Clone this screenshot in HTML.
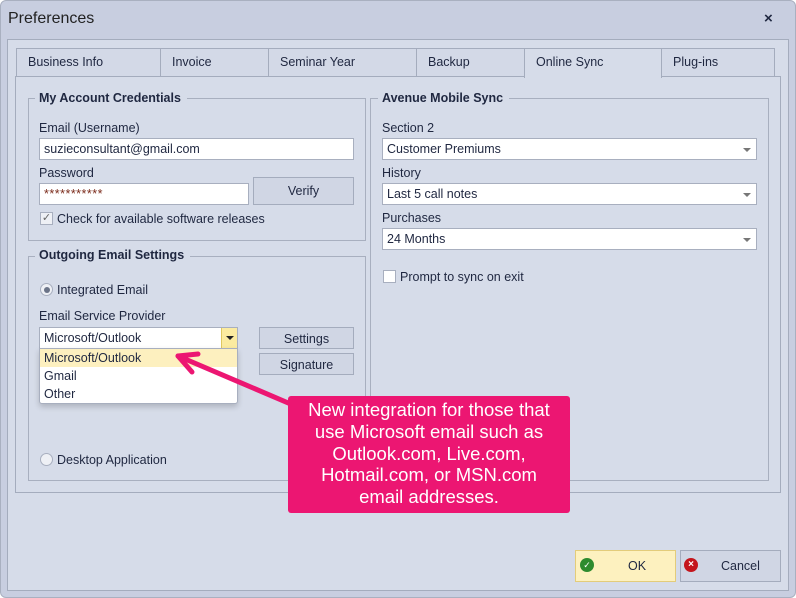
<!DOCTYPE html>
<html><head><meta charset="utf-8"><style>
*{box-sizing:border-box;margin:0;padding:0}
body{width:796px;height:598px;background:#fff;font-family:"Liberation Sans","DejaVu Sans",sans-serif;font-size:12px;color:#1f2740;position:relative;overflow:hidden}
.a{position:absolute}
.win{left:0;top:0;width:796px;height:598px;background:#c8cee0;border:1px solid #a9b0c0;border-radius:6px}
.box{border:1px solid #a4acbd}
.tab{top:48px;height:29px;border:1px solid #a4acbd;border-bottom:none;background:#d3d9e7;padding:6px 0 0 11px;font-size:12.5px}
.grp{border:1px solid #a8afbf}
.gt{background:#d6dce9;padding:0 6px 0 4px;font-weight:bold;font-size:12.5px}
.in{background:#fff;border:1px solid #a8afbf;height:22px;padding:3px 0 0 4px;font-size:12.5px}
.btn{border:1px solid #a4acbd;background:#d0d6e4;text-align:center;font-size:12.5px}
.dd::after{content:"";position:absolute;right:5px;top:9px;border:4px solid transparent;border-top:4px solid #777;border-bottom:none}
.lbl{font-size:12.5px}
.it{height:18px;line-height:18px;padding-left:4px;font-size:12.5px}
</style></head><body>
<div class="a win"></div>
<div class="a" style="left:8px;top:10px;font-size:16px;color:#222">Preferences</div>
<div class="a" style="left:764px;top:10px;font-size:15px;font-weight:bold">×</div>
<div class="a" style="left:7px;top:39px;width:782px;height:552px;border:1px solid #a4acbd;background:#d6dce9"></div>
<!-- tabs -->
<div class="a tab" style="left:16px;width:145px">Business Info</div>
<div class="a tab" style="left:160px;width:109px">Invoice</div>
<div class="a tab" style="left:268px;width:149px">Seminar Year</div>
<div class="a tab" style="left:416px;width:109px">Backup</div>
<div class="a tab" style="left:661px;width:114px">Plug-ins</div>
<div class="a box" style="left:15px;top:76px;width:766px;height:417px"></div>
<div class="a tab" style="left:524px;top:48px;width:138px;height:30px;background:#d6dce9">Online Sync</div>
<!-- Credentials -->
<div class="a grp" style="left:28px;top:98px;width:338px;height:143px"></div>
<div class="a gt" style="left:35px;top:91px">My Account Credentials</div>
<div class="a lbl" style="left:39px;top:121px">Email (Username)</div>
<div class="a in" style="left:39px;top:138px;width:315px">suzieconsultant@gmail.com</div>
<div class="a lbl" style="left:39px;top:166px">Password</div>
<div class="a in" style="left:39px;top:183px;width:210px;color:#7a2a1a;letter-spacing:0.5px">***********</div>
<div class="a btn" style="left:253px;top:177px;width:101px;height:28px;padding-top:6px">Verify</div>
<div class="a" style="left:40px;top:212px;width:13px;height:13px;border:1px solid #a8afbf;background:#eef0f5;font-size:11px;line-height:11px;text-align:center;color:#666">✓</div>
<div class="a lbl" style="left:57px;top:212px">Check for available software releases</div>
<!-- Outgoing -->
<div class="a grp" style="left:28px;top:256px;width:338px;height:225px"></div>
<div class="a gt" style="left:35px;top:248px">Outgoing Email Settings</div>
<div class="a" style="left:40px;top:283px;width:13px;height:13px;border:1px solid #a8afbf;border-radius:50%;background:#eef0f5"><div class="a" style="left:2.5px;top:2.5px;width:6px;height:6px;border-radius:50%;background:#6b7488"></div></div>
<div class="a lbl" style="left:57px;top:283px">Integrated Email</div>
<div class="a lbl" style="left:39px;top:309px">Email Service Provider</div>
<div class="a in" style="left:39px;top:327px;width:199px">Microsoft/Outlook</div>
<div class="a" style="left:221px;top:328px;width:16px;height:20px;background:#fbeba0;border-left:1px solid #e0c860"><div class="a" style="left:4px;top:8px;border:4px solid transparent;border-top:4px solid #222;border-bottom:none"></div></div>
<div class="a btn" style="left:259px;top:327px;width:95px;height:22px;padding-top:4px">Settings</div>
<div class="a btn" style="left:259px;top:353px;width:95px;height:22px;padding-top:4px">Signature</div>
<div class="a" style="left:39px;top:348px;width:199px;height:56px;background:#fff;border:1px solid #a8afbf;border-radius:0 0 3px 3px;box-shadow:0 3px 6px rgba(0,0,0,0.18)">
<div class="it" style="background:#fdf0bf">Microsoft/Outlook</div>
<div class="it">Gmail</div>
<div class="it">Other</div>
</div>
<div class="a" style="left:40px;top:453px;width:13px;height:13px;border:1px solid #a8afbf;border-radius:50%;background:#eef0f5"></div>
<div class="a lbl" style="left:57px;top:453px">Desktop Application</div>
<!-- Avenue -->
<div class="a grp" style="left:370px;top:98px;width:399px;height:383px"></div>
<div class="a gt" style="left:378px;top:91px">Avenue Mobile Sync</div>
<div class="a lbl" style="left:382px;top:121px">Section 2</div>
<div class="a in dd" style="left:382px;top:138px;width:375px">Customer Premiums</div>
<div class="a lbl" style="left:382px;top:166px">History</div>
<div class="a in dd" style="left:382px;top:183px;width:375px">Last 5 call notes</div>
<div class="a lbl" style="left:382px;top:211px">Purchases</div>
<div class="a in dd" style="left:382px;top:228px;width:375px">24 Months</div>
<div class="a" style="left:383px;top:270px;width:13px;height:13px;border:1px solid #a8afbf;background:#fff"></div>
<div class="a lbl" style="left:400px;top:270px">Prompt to sync on exit</div>
<!-- buttons -->
<div class="a" style="left:575px;top:550px;width:101px;height:32px;background:#fdf1bf;border:1px solid #e3cc7a;padding:8px 0 0 52px;font-size:12.5px">OK</div>
<div class="a" style="left:580px;top:558px;width:14px;height:14px;border-radius:50%;background:#2e8b2e;color:#fff;font-size:9px;line-height:14px;text-align:center;font-weight:bold">✓</div>
<div class="a btn" style="left:680px;top:550px;width:101px;height:32px;padding:8px 0 0 40px;text-align:left">Cancel</div>
<div class="a" style="left:684px;top:558px;width:14px;height:14px;border-radius:50%;background:#c4151c;color:#fff;font-size:10px;line-height:14px;text-align:center;font-weight:bold">×</div>
<!-- callout -->
<svg class="a" style="left:0;top:0" width="796" height="598"><g fill="none" stroke="#ec1672" stroke-width="5" stroke-linecap="round" stroke-linejoin="round"><line x1="300" y1="408" x2="178" y2="356"/><polyline points="198,354 178,356 192,372"/></g></svg>
<div class="a" style="left:288px;top:396px;width:282px;height:117px;background:#ec1672;border-radius:3px;color:#fff;font-size:18.5px;line-height:21.8px;text-align:center;padding-top:3px;white-space:nowrap">New integration for those that<br>use Microsoft email such as<br>Outlook.com, Live.com,<br>Hotmail.com, or MSN.com<br>email addresses.</div>
</body></html>
